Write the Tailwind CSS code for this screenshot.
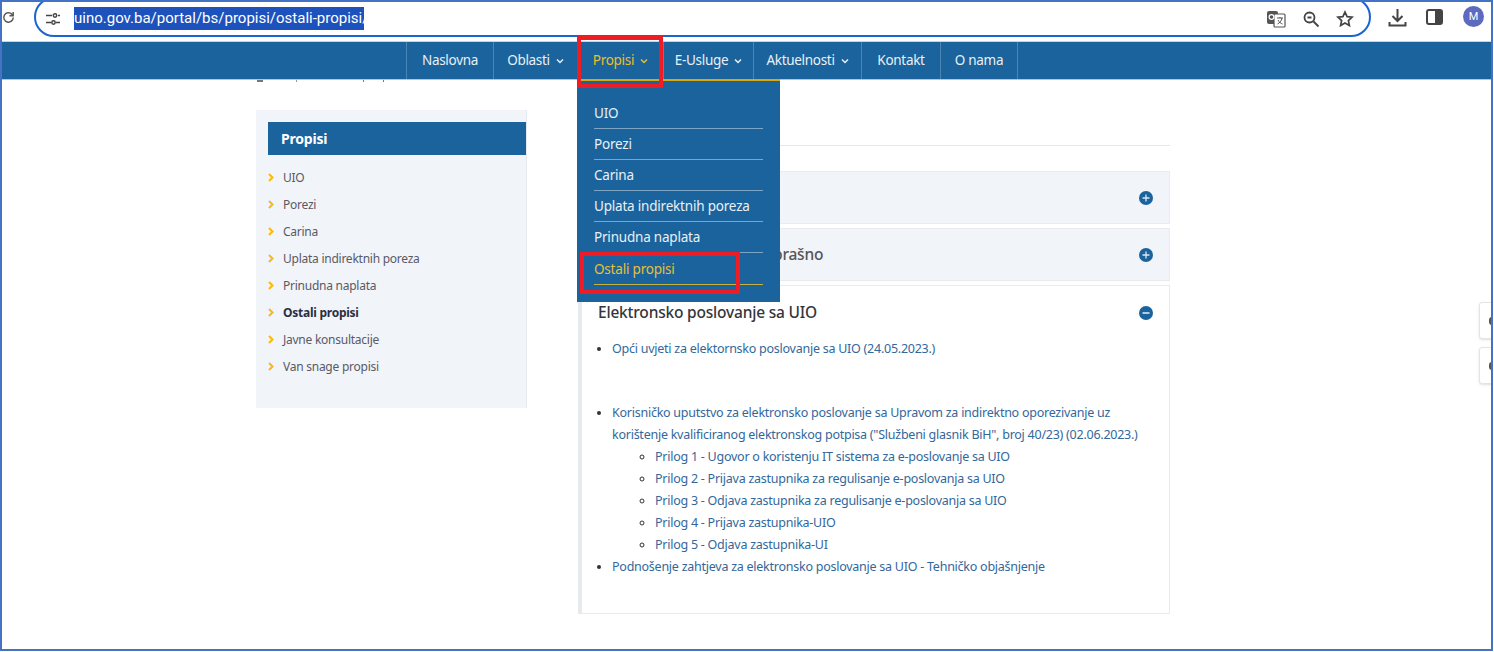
<!DOCTYPE html>
<html lang="bs">
<head>
  <meta charset="UTF-8" />
  <title>Ostali propisi</title>
  <script src="https://cdn.jsdelivr.net/npm/@tailwindcss/browser@4"></script>
</head>
<body class="bg-white font-['Noto_Sans',sans-serif]">
  <div class="relative w-[1493px] h-[651px] border-2 border-[#4472c4] overflow-hidden bg-white">

    <!-- browser bar -->
    <div class="h-[40px] flex items-center border-b border-[#cfd3d6] relative">
      <svg class="w-[15px] h-[15px] ml-[-1px] mt-[-8px]" viewBox="0 0 16 16" fill="none" stroke="#5a5a5a" stroke-width="1.6"><path d="M13 8a5 5 0 1 1-1.500-3.600L13 6"/><path d="M13 2v4H9" /></svg>
      <div class="ml-[18px] w-[1337px] h-[40px] mt-[-10px] border-2 border-[#1a65d0] rounded-full flex items-center pl-[9px] pt-[4px]">
        <svg class="w-[16px] h-[16px] shrink-0" viewBox="0 0 16 16" fill="none" stroke="#444" stroke-width="1.5"><path d="M1 4.500h6M11 11.500h4M1 11.500h5M13 4.500h2"/><circle cx="10" cy="4.500" r="1.700"/><circle cx="8.500" cy="11.500" r="1.700"/></svg>
        <span class="ml-[13px] bg-[#1d52bd] text-white h-[23px] leading-[23px] text-[15px] font-['Roboto',sans-serif] w-[290px] whitespace-nowrap">uino.gov.ba/portal/bs/propisi/ostali-propisi/</span>
        <div class="ml-auto flex items-center gap-[16px] pr-[15px]">
          <svg class="w-[20px] h-[18px]" viewBox="0 0 20 18"><rect x="1" y="1" width="11" height="13" rx="2" fill="#555"/><rect x="8" y="4" width="11" height="13" rx="1" fill="#fff" stroke="#555" stroke-width="1.200"/><path d="M11 8h6M14 7v1M16 8c-.5 3-2.500 5-4.500 6M12 10c1 2 3 3.500 4.500 4" stroke="#555" fill="none"/><circle cx="5.500" cy="7" r="2.400" fill="none" stroke="#fff" stroke-width="1.200"/></svg>
          <svg class="w-[18px] h-[18px]" viewBox="0 0 18 18" fill="none" stroke="#444" stroke-width="1.800"><circle cx="7.500" cy="7.500" r="5"/><path d="M11.500 11.500l5 5M5.500 7.500h4"/></svg>
          <svg class="w-[18px] h-[18px]" viewBox="0 0 18 18" fill="none" stroke="#444" stroke-width="1.700"><path d="M9 2l2.100 4.600 5 .6-3.700 3.400 1 5L9 13.100 4.600 15.600l1-5L1.900 7.200l5-.6z"/></svg>
        </div>
      </div>
      <svg class="absolute left-[1386px] top-[6px] w-[19px] h-[19px]" viewBox="0 0 19 19" fill="none" stroke="#444" stroke-width="2"><path d="M9.500 1v11M4.500 8l5 5 5-5M1.500 14v3.500h16V14"/></svg>
      <svg class="absolute left-[1424px] top-[7px] w-[17px] h-[16px]" viewBox="0 0 17 16"><rect x="1" y="1" width="15" height="14" rx="2" fill="#fff" stroke="#444" stroke-width="2"/><rect x="9" y="1" width="7" height="14" fill="#444"/></svg>
      <div class="absolute left-[1461px] top-[4px] w-[21px] h-[21px] rounded-full bg-[#5c6bc0] text-white text-[11px] leading-[21px] text-center font-['Roboto',sans-serif]">M</div>
    </div>

    <!-- main nav -->
    <nav class="h-[38px] bg-[#1a639c] border-b border-[#a9c8e2] flex pl-[404px] text-[13.500px] tracking-[-0.3px] text-[#e9f0f6]">
      <a class="w-[87px] flex items-center justify-center border-l border-[#4a85b3]">Naslovna</a>
      <a class="w-[84px] flex items-center justify-center gap-[6px] border-l border-[#4a85b3]">Oblasti <svg class="w-[8px] h-[6px]" viewBox="0 0 8 6" fill="none" stroke="currentColor" stroke-width="1.500"><path d="M1 1.500l3 3 3-3"/></svg></a>
      <a class="w-[86px] flex items-center justify-center gap-[6px] border-l border-[#4a85b3] text-[#eebd2b]">Propisi <svg class="w-[8px] h-[6px]" viewBox="0 0 8 6" fill="none" stroke="currentColor" stroke-width="1.500"><path d="M1 1.500l3 3 3-3"/></svg></a>
      <a class="w-[90px] flex items-center justify-center gap-[6px] border-l border-[#4a85b3]">E-Usluge <svg class="w-[8px] h-[6px]" viewBox="0 0 8 6" fill="none" stroke="currentColor" stroke-width="1.500"><path d="M1 1.500l3 3 3-3"/></svg></a>
      <a class="w-[108px] flex items-center justify-center gap-[6px] border-l border-[#4a85b3]">Aktuelnosti <svg class="w-[8px] h-[6px]" viewBox="0 0 8 6" fill="none" stroke="currentColor" stroke-width="1.500"><path d="M1 1.500l3 3 3-3"/></svg></a>
      <a class="w-[79px] flex items-center justify-center border-l border-[#4a85b3]">Kontakt</a>
      <a class="w-[78px] flex items-center justify-center border-x border-[#4a85b3]">O nama</a>
    </nav>

    <!-- breadcrumb descenders peeking out under the nav -->
    <div class="absolute left-[255px] top-[78px] flex">
      <span class="w-[6px] h-[2px] bg-[#777]"></span>
      <span class="ml-[33px] w-[1px] h-[2px] bg-[#999]"></span>
      <span class="ml-[66px] w-[1px] h-[2px] bg-[#777]"></span>
      <span class="ml-[19px] w-[1px] h-[2px] bg-[#777]"></span>
    </div>

    <!-- page -->
    <div class="flex pl-[254px] pt-[30px]">
      <aside class="w-[271px] h-[298px] bg-[#f1f4f8] border-r border-[#e6eaee] pt-[12px] pl-[12px]">
        <div class="h-[33px] w-[258px] bg-[#1a639c] text-white font-bold text-[14px] leading-[33px] pl-[13px] tracking-[-0.2px]">Propisi</div>
        <ul class="mt-[9px] text-[12px] tracking-[-0.25px] text-[#5a5a66]">
          <li class="h-[27px] flex items-center"><svg class="w-[6px] h-[9px] mr-[9px]" viewBox="0 0 6 9" fill="none" stroke="#fbb80f" stroke-width="2"><path d="M1 1l3.500 3.500L1 8"/></svg>UIO</li>
          <li class="h-[27px] flex items-center"><svg class="w-[6px] h-[9px] mr-[9px]" viewBox="0 0 6 9" fill="none" stroke="#fbb80f" stroke-width="2"><path d="M1 1l3.500 3.500L1 8"/></svg>Porezi</li>
          <li class="h-[27px] flex items-center"><svg class="w-[6px] h-[9px] mr-[9px]" viewBox="0 0 6 9" fill="none" stroke="#fbb80f" stroke-width="2"><path d="M1 1l3.500 3.500L1 8"/></svg>Carina</li>
          <li class="h-[27px] flex items-center"><svg class="w-[6px] h-[9px] mr-[9px]" viewBox="0 0 6 9" fill="none" stroke="#fbb80f" stroke-width="2"><path d="M1 1l3.500 3.500L1 8"/></svg>Uplata indirektnih poreza</li>
          <li class="h-[27px] flex items-center"><svg class="w-[6px] h-[9px] mr-[9px]" viewBox="0 0 6 9" fill="none" stroke="#fbb80f" stroke-width="2"><path d="M1 1l3.500 3.500L1 8"/></svg>Prinudna naplata</li>
          <li class="h-[27px] flex items-center font-bold text-[#2b2f45]"><svg class="w-[6px] h-[9px] mr-[9px]" viewBox="0 0 6 9" fill="none" stroke="#fbb80f" stroke-width="2"><path d="M1 1l3.500 3.500L1 8"/></svg>Ostali propisi</li>
          <li class="h-[27px] flex items-center"><svg class="w-[6px] h-[9px] mr-[9px]" viewBox="0 0 6 9" fill="none" stroke="#fbb80f" stroke-width="2"><path d="M1 1l3.500 3.500L1 8"/></svg>Javne konsultacije</li>
          <li class="h-[27px] flex items-center"><svg class="w-[6px] h-[9px] mr-[9px]" viewBox="0 0 6 9" fill="none" stroke="#fbb80f" stroke-width="2"><path d="M1 1l3.500 3.500L1 8"/></svg>Van snage propisi</li>
        </ul>
      </aside>

      <main class="ml-[51px] w-[592px]">
        <div class="h-[36px] border-b border-[#e4e7ea]"></div>
        <div class="mt-[25px] h-[53px] bg-[#f1f4f8] border border-[#e8ecef] flex items-center justify-end pr-[16px]">
          <svg class="w-[14px] h-[14px]" viewBox="0 0 14 14"><circle cx="7" cy="7" r="7" fill="#1a639c"/><path d="M3.500 7h7M7 3.500v7" stroke="#dce8f2" stroke-width="1.300"/></svg>
        </div>
        <div class="mt-[4px] h-[53px] bg-[#f1f4f8] border border-[#e8ecef] flex items-center pr-[16px] pl-[194px]">
          <span class="text-[15.500px] font-medium text-[#555] tracking-[-0.2px] whitespace-nowrap">prašno</span>
          <svg class="w-[14px] h-[14px] ml-auto" viewBox="0 0 14 14"><circle cx="7" cy="7" r="7" fill="#1a639c"/><path d="M3.500 7h7M7 3.500v7" stroke="#dce8f2" stroke-width="1.300"/></svg>
        </div>
        <div class="mt-[4px] h-[329px] border border-[#e8ecef] border-l-[4px] border-l-[#e6e9ed] pl-[16px] pr-[16px] pt-[16px]">
          <div class="flex items-center justify-between h-[22px]">
            <h3 class="text-[15.500px] font-medium text-[#33363a] tracking-[-0.2px]">Elektronsko poslovanje sa UIO</h3>
            <svg class="w-[14px] h-[14px]" viewBox="0 0 14 14"><circle cx="7" cy="7" r="7" fill="#1a639c"/><path d="M3.500 7h7" stroke="#e6eef5" stroke-width="1.500"/></svg>
          </div>
          <ul class="list-disc pl-[14px] mt-[14px] text-[12.500px] leading-[22px] tracking-[-0.25px] text-[#33679b] marker:text-[#333]">
            <li class="mb-[42px]">Opći uvjeti za elektornsko poslovanje sa UIO (24.05.2023.)</li>
            <li>Korisničko uputstvo za elektronsko poslovanje sa Upravom za indirektno oporezivanje uz<br>korištenje kvalificiranog elektronskog potpisa ("Službeni glasnik BiH", broj 40/23) (02.06.2023.)
              <ul class="list-[circle] pl-[43px]">
                <li>Prilog 1 - Ugovor o koristenju IT sistema za e-poslovanje sa UIO</li>
                <li>Prilog 2 - Prijava zastupnika za regulisanje e-poslovanja sa UIO</li>
                <li>Prilog 3 - Odjava zastupnika za regulisanje e-poslovanja sa UIO</li>
                <li>Prilog 4 - Prijava zastupnika-UIO</li>
                <li>Prilog 5 - Odjava zastupnika-UI</li>
              </ul>
            </li>
            <li>Podnošenje zahtjeva za elektronsko poslovanje sa UIO - Tehničko objašnjenje</li>
          </ul>
        </div>
      </main>
    </div>

    <!-- dropdown menu -->
    <div class="absolute left-[575px] top-[77px] w-[203px] h-[223px] bg-[#1a639c] border-t-[2px] border-[#d9a90e] px-[17px] pt-[17px] text-[13.500px] tracking-[-0.2px] text-[#e9f0f6]">
      <div class="h-[31px] border-b border-[#7fa5c4] leading-[31px]">UIO</div>
      <div class="h-[31px] border-b border-[#7fa5c4] leading-[31px]">Porezi</div>
      <div class="h-[31px] border-b border-[#7fa5c4] leading-[31px]">Carina</div>
      <div class="h-[31px] border-b border-[#7fa5c4] leading-[31px]">Uplata indirektnih poreza</div>
      <div class="h-[31px] border-b border-[#7fa5c4] leading-[31px]">Prinudna naplata</div>
      <div class="h-[32px] border-b border-[#c9b23a] leading-[32px] text-[#e8c033]">Ostali propisi</div>
    </div>

    <!-- right side tabs -->
    <div class="absolute left-[1477px] top-[300px] w-[20px] h-[37px] bg-white rounded-l-[3px] border border-[#e2e4e6] shadow-sm"><span class="absolute left-[9px] top-[14px] w-[6px] h-[8px] rounded-full bg-[#555]"></span></div>
    <div class="absolute left-[1477px] top-[345px] w-[20px] h-[37px] bg-white rounded-l-[3px] border border-[#e2e4e6] shadow-sm"><span class="absolute left-[9px] top-[14px] w-[6px] h-[8px] rounded-full bg-[#555]"></span></div>

    <!-- red annotations -->
    <div class="absolute left-[575px] top-[34px] w-[86px] h-[52px] border-[4px] border-[#ee1c25]"></div>
    <div class="absolute left-[578px] top-[250px] w-[160px] h-[42px] border-[4px] border-[#ee1c25]"></div>
  </div>
</body>
</html>
